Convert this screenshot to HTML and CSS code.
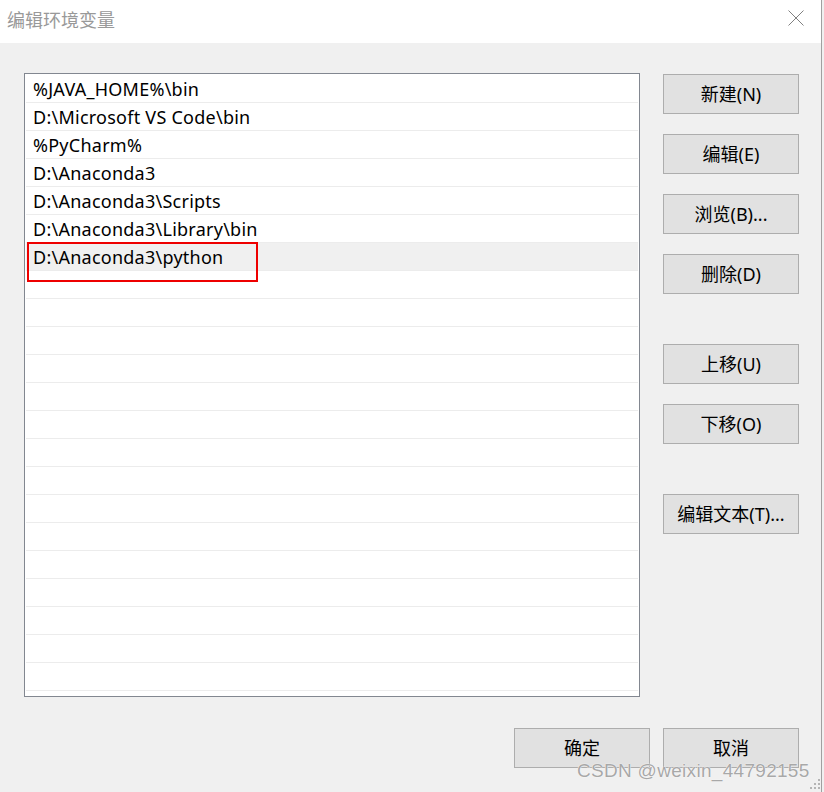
FILE: index.html
```html
<!DOCTYPE html>
<html lang="zh">
<head>
<meta charset="utf-8">
<link rel="stylesheet" href="styles.css">
</head>
<body>
<div class="window">
  <div class="titlebar">
    <span class="title">编辑环境变量</span>
    <svg class="close" width="16" height="16" viewBox="0 0 16 16"><path d="M0.5 0.5 L15.5 15.5 M15.5 0.5 L0.5 15.5" stroke="#808080" stroke-width="1" fill="none"/></svg>
  </div>
  <div class="content">
    <div class="main">
      <div class="listbox">
        <div class="row">%JAVA_HOME%\bin</div>
        <div class="row">D:\Microsoft VS Code\bin</div>
        <div class="row">%PyCharm%</div>
        <div class="row">D:\Anaconda3</div>
        <div class="row">D:\Anaconda3\Scripts</div>
        <div class="row">D:\Anaconda3\Library\bin</div>
        <div class="row selected">D:\Anaconda3\python</div>
        <div class="row"></div><div class="row"></div><div class="row"></div><div class="row"></div>
        <div class="row"></div><div class="row"></div><div class="row"></div><div class="row"></div>
        <div class="row"></div><div class="row"></div><div class="row"></div><div class="row"></div>
        <div class="row"></div><div class="row"></div><div class="row"></div><div class="row"></div>
      </div>
      <div class="side">
        <div class="group">
          <button class="btn">新建(N)</button>
          <button class="btn">编辑(E)</button>
          <button class="btn">浏览(B)...</button>
          <button class="btn">删除(D)</button>
        </div>
        <div class="group">
          <button class="btn">上移(U)</button>
          <button class="btn">下移(O)</button>
        </div>
        <div class="group">
          <button class="btn">编辑文本(T)...</button>
        </div>
      </div>
    </div>
    <div class="footer">
      <button class="btn">确定</button>
      <button class="btn">取消</button>
    </div>
  </div>
  <div class="highlight"></div>
  <div class="watermark">CSDN @weixin_44792155</div>
  <svg class="grip" width="12" height="12" viewBox="0 0 12 12">
    <g fill="#b4b4b4">
      <rect x="8" y="0" width="2" height="2"/>
      <rect x="4" y="4" width="2" height="2"/><rect x="8" y="4" width="2" height="2"/>
      <rect x="0" y="8" width="2" height="2"/><rect x="4" y="8" width="2" height="2"/><rect x="8" y="8" width="2" height="2"/>
    </g>
  </svg>
</div>
</body>
</html>
```
FILE: styles.css
```css
html, body {
  margin: 0;
  padding: 0;
  background: #f0f0f0;
}
body {
  width: 824px;
  height: 792px;
  overflow: hidden;
  font-family: "Noto Sans", "Noto Sans CJK SC", sans-serif;
}
.window {
  position: relative;
  width: 821px;
  height: 792px;
  border-right: 1px solid #a0a0a0;
  background: #f0f0f0;
  box-sizing: content-box;
}
.titlebar {
  height: 43px;
  background: #ffffff;
  display: flex;
  align-items: center;
  justify-content: space-between;
}
.title {
  font-family: "Noto Sans CJK SC", sans-serif;
  font-size: 18px;
  color: #999999;
  margin-left: 7px;
  margin-top: -6px;
}
.close {
  margin-right: 17px;
  margin-top: -8px;
}
.content {
  padding: 30px 0 0 24px;
}
.main {
  display: flex;
  gap: 23px;
}
.listbox {
  width: 614px;
  height: 621px;
  border: 1px solid #828790;
  background: #ffffff;
  overflow: hidden;
  padding-top: 1px;
  box-sizing: content-box;
}
.row {
  height: 27px;
  border-bottom: 1px solid #ececec;
  margin: 0 1px;
  padding: 1px 0 0 7px;
  box-sizing: content-box;
  height: 26px;
  font-size: 18px;
  line-height: 26px;
  letter-spacing: 0.25px;
  color: #000000;
  white-space: nowrap;
}
.row.selected {
  background: #f0f0f0;
}
.side {
  display: flex;
  flex-direction: column;
  padding-top: 1px;
  gap: 50px;
}
.group {
  display: flex;
  flex-direction: column;
  gap: 20px;
}
.btn {
  width: 136px;
  height: 40px;
  border: 1px solid #adadad;
  background: #e1e1e1;
  color: #000000;
  font-family: "Noto Sans", "Noto Sans CJK SC", sans-serif;
  font-size: 18px;
  padding: 0;
  margin: 0;
  line-height: 1;
  box-sizing: border-box;
}
.footer {
  display: flex;
  justify-content: flex-end;
  gap: 13px;
  padding-right: 22px;
  margin-top: 31px;
}
.highlight {
  position: absolute;
  left: 27px;
  top: 242px;
  width: 227px;
  height: 36px;
  border: 2px solid #ee0000;
}
.watermark {
  position: absolute;
  left: 577px;
  top: 760px;
  font-family: "Liberation Sans", sans-serif;
  font-size: 19px;
  color: #a8a8a8;
  letter-spacing: 0.3px;
  text-shadow: 0 0 1px #ffffff, 0 0 1px #ffffff;
}
.grip {
  position: absolute;
  left: 810px;
  top: 779px;
}
```
